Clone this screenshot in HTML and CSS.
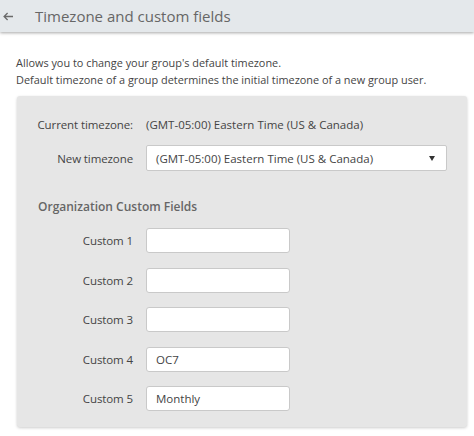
FILE: index.html
```html
<!DOCTYPE html>
<html>
<head>
<meta charset="utf-8">
<link rel="stylesheet" href="styles.css">
</head>
<body>
<header class="topbar">
  <svg class="back" width="10" height="9" viewBox="0 0 10 9"><path d="M10 4.5H1.2M4.6 1L1.1 4.5 4.6 8" fill="none" stroke="#6a6a6a" stroke-width="1.3"/></svg>
  <h1 class="title">Timezone and custom fields</h1>
</header>
<p class="desc">Allows you to change your group's default timezone.<br>Default timezone of a group determines the initial timezone of a new group user.</p>
<section class="card">
  <div class="row current">
    <span class="label">Current timezone:</span>
    <span class="value">(GMT-05:00) Eastern Time (US &amp; Canada)</span>
  </div>
  <div class="row">
    <span class="label">New timezone</span>
    <div class="select"><span>(GMT-05:00) Eastern Time (US &amp; Canada)</span><span class="caret"></span></div>
  </div>
  <h2 class="heading">Organization Custom Fields</h2>
  <div class="fields">
    <div class="row"><span class="label">Custom 1</span><div class="input"></div></div>
    <div class="row"><span class="label">Custom 2</span><div class="input"></div></div>
    <div class="row"><span class="label">Custom 3</span><div class="input"></div></div>
    <div class="row"><span class="label">Custom 4</span><div class="input">OC7</div></div>
    <div class="row"><span class="label">Custom 5</span><div class="input">Monthly</div></div>
  </div>
</section>
</body>
</html>
```
FILE: styles.css
```css
html, body { margin: 0; padding: 0; background: #fff; }
body { font-family: "Open Sans", "Noto Sans", sans-serif; color: #444; width: 474px; height: 436px; overflow: hidden; }
.topbar {
  height: 32px; background: #e4e8eb; box-shadow: 0 1px 3px rgba(0,0,0,0.35);
  display: flex; align-items: center; position: relative;
}
.back { margin-left: 3px; margin-right: 22px; }
.title { margin: 0; font-size: 15px; font-weight: 400; color: #666; }
.desc { margin: 22px 0 0 16px; font-size: 10.9px; line-height: 17px; color: #444; }
.card {
  margin: 8px 7px 0 17px; background: #e6e6e6; border-radius: 3px;
  box-shadow: 0 1px 3px rgba(0,0,0,0.2);
  padding: 18px 20px 16px 21px;
}
.row { display: flex; align-items: center; font-size: 11.5px; }
.label {
  width: 95px; margin-right: 13px; flex: none; color: #444; white-space: nowrap;
  display: flex; justify-content: flex-end; letter-spacing: -0.1px;
}
.current { height: 20px; margin-bottom: 11px; }
.select {
  flex: 1; height: 26px; box-sizing: border-box; background: #fff;
  border: 1px solid #c9c9c9; border-radius: 2px; display: flex; align-items: center;
  justify-content: space-between; padding: 0 11px 0 9px; color: #444;
}
.caret { width: 0; height: 0; border-left: 3.5px solid transparent; border-right: 3.5px solid transparent; border-top: 5px solid #333; }
.heading { margin: 27px 0 0 0; height: 18px; line-height: 18px; font-size: 12px; font-weight: 600; color: #666; }
.fields { display: flex; flex-direction: column; gap: 14.5px; margin-top: 12px; }
.input {
  width: 144px; height: 25px; box-sizing: border-box; background: #fff;
  border: 1px solid #c9c9c9; border-radius: 3px; padding: 0 9px;
  display: flex; align-items: center; color: #444;
}
```
